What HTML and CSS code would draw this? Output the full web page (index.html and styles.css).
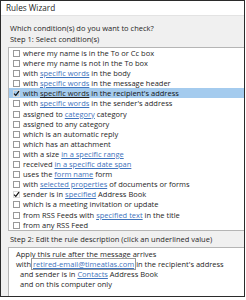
FILE: index.html
```html
<!DOCTYPE html>
<html lang="en">

<head>
    <meta charset="UTF-8">
    <title>Rules Wizard</title>
    <link rel="stylesheet" href="styles.css">
</head>

<body>

    <div class="window">
        <div class="titlebar">Rules Wizard</div>
        <div class="content">
            <p class="label">Which condition(s) do you want to check?</p>
            <p class="label">Step 1: Select condition(s)</p>

            <ul class="condition-list">
                <li class="condition"><span class="box"></span>where my name is in the To or Cc box</li>
                <li class="condition"><span class="box"></span>where my name is not in the To box</li>
                <li class="condition"><span class="box"></span>with <a class="link">specific words</a> in the body</li>
                <li class="condition"><span class="box"></span>with <a class="link">specific words</a> in the message header</li>
                <li class="condition selected"><span class="box checked"><svg viewBox="0 0 7 7"><polyline points="1,3.6 2.8,5.4 6,1.2" /></svg></span>with <a class="link">specific words</a> in the recipient's address</li>
                <li class="condition"><span class="box"></span>with <a class="link">specific words</a> in the sender's address</li>
                <li class="condition"><span class="box"></span>assigned to <a class="link">category</a> category</li>
                <li class="condition"><span class="box"></span>assigned to any category</li>
                <li class="condition"><span class="box"></span>which is an automatic reply</li>
                <li class="condition"><span class="box"></span>which has an attachment</li>
                <li class="condition"><span class="box"></span>with a size <a class="link">in a specific range</a></li>
                <li class="condition"><span class="box"></span>received <a class="link">in a specific date span</a></li>
                <li class="condition"><span class="box"></span>uses the <a class="link">form name</a> form</li>
                <li class="condition"><span class="box"></span>with <a class="link">selected properties</a> of documents or forms</li>
                <li class="condition"><span class="box checked"><svg viewBox="0 0 7 7"><polyline points="1,3.6 2.8,5.4 6,1.2" /></svg></span>sender is in <a class="link">specified</a> Address Book</li>
                <li class="condition"><span class="box"></span>which is a meeting invitation or update</li>
                <li class="condition"><span class="box"></span>from RSS Feeds with <a class="link">specified text</a> in the title</li>
                <li class="condition"><span class="box"></span>from any RSS Feed</li>
            </ul>

            <p class="label step2">Step 2: Edit the rule description (click an underlined value)</p>

            <div class="description">
                <div class="desc-line">Apply this rule after the message arrives</div>
                <div class="desc-line">with<a class="link focused">retired-email@timeatlas.com</a>in the recipient's address</div>
                <div class="desc-line indent">and sender is in <a class="link">Contacts</a> Address Book</div>
                <div class="desc-line indent">and on this computer only</div>
            </div>
        </div>
    </div>

</body>

</html>
```

FILE: styles.css
```css
body {
    margin: 0;
    background-color: #fff;
    font-family: "Open Sans", "Noto Sans", sans-serif;
    color: #262626;
}

.window {
    width: 243px;
    height: 295px;
    border: 1px solid #2b2b2b;
    display: flex;
    flex-direction: column;
    background-color: #f0f0f0;
}

.titlebar {
    height: 15px;
    line-height: 14px;
    padding-left: 5px;
    font-size: 8.2px;
    background-color: #fff;
    border-bottom: 1px solid #e3e3e3;
    box-sizing: border-box;
}

.content {
    flex: 1;
    display: flex;
    flex-direction: column;
    padding: 7px 0 0 7px;
}

.label {
    margin: 0;
    padding-left: 2px;
    font-size: 7.5px;
    line-height: 11px;
}

.condition-list {
    list-style: none;
    margin: 2px 0 0;
    padding: 0;
    background-color: #fff;
    border: 1px solid #b5b5b5;
    border-right: none;
}

.condition {
    height: 10.1px;
    line-height: 10.1px;
    font-size: 7.5px;
    white-space: nowrap;
}

.condition.selected {
    background-color: #a4cbee;
    color: #111;
}

.box {
    display: inline-block;
    vertical-align: -1px;
    width: 5px;
    height: 5px;
    margin: 0 3px 0 4px;
    border: 1px solid #999;
    background-color: #fff;
}

.box.checked {
    border-color: #d9d9d9;
    background-color: transparent;
}

.box svg {
    display: block;
    width: 7px;
    height: 7px;
    margin: -1px;
    fill: none;
    stroke: #111;
    stroke-width: 1.2;
}

.link {
    color: #3f74bd;
    text-decoration: underline;
}

.selected .link {
    color: #222;
}

.step2 {
    margin-top: 3px;
}

.description {
    flex: 1;
    margin-top: 2px;
    padding: 1px 0 0 7px;
    background-color: #fff;
    border: 1px solid #b5b5b5;
    border-right: none;
    border-bottom: none;
    font-size: 7.5px;
}

.desc-line {
    line-height: 10px;
    white-space: nowrap;
}

.desc-line.indent {
    padding-left: 4px;
}

.link.focused {
    margin: 0 1px;
    padding: 0 1px;
    outline: 1px solid #9a9a9a;
}
```
